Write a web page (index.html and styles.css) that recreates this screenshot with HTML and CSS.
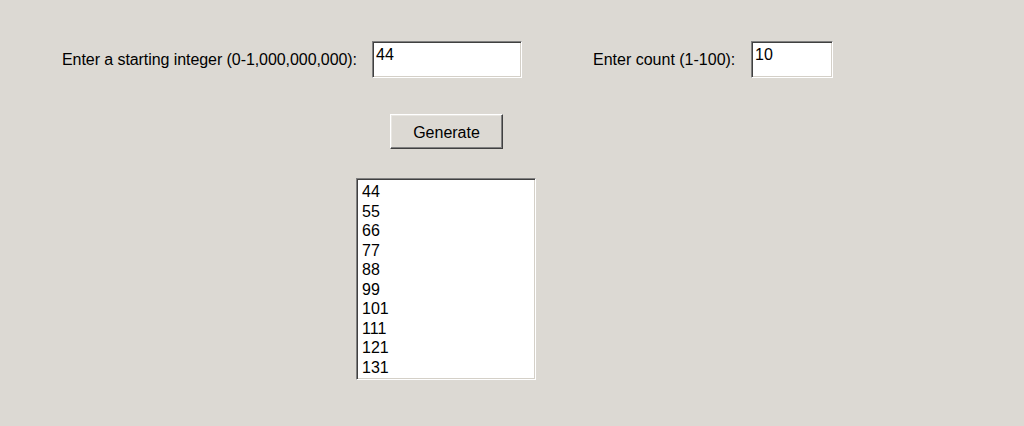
FILE: index.html
```html
<!DOCTYPE html>
<html lang="en">
<head>
<meta charset="utf-8">
<title>Generator</title>
<link rel="stylesheet" href="styles.css">
</head>
<body>
<div class="app">
  <div class="inputs-row">
    <span class="label label-start">Enter a starting integer (0-1,000,000,000):</span>
    <div class="field field-start">44</div>
    <span class="label label-count">Enter count (1-100):</span>
    <div class="field field-count">10</div>
  </div>
  <div class="button-row">
    <div class="button">Generate</div>
  </div>
  <div class="list-row">
    <div class="listbox">
      <div class="item">44</div>
      <div class="item">55</div>
      <div class="item">66</div>
      <div class="item">77</div>
      <div class="item">88</div>
      <div class="item">99</div>
      <div class="item">101</div>
      <div class="item">111</div>
      <div class="item">121</div>
      <div class="item">131</div>
    </div>
  </div>
</div>
</body>
</html>
```

FILE: styles.css
```css
html, body {
  margin: 0;
  padding: 0;
}
body {
  background: #dcd9d3;
  font-family: "Liberation Sans", Arial, sans-serif;
  font-size: 16px;
  color: #000;
  width: 1024px;
  height: 426px;
  overflow: hidden;
}
.app {
  display: flex;
  flex-direction: column;
  padding-top: 41px;
}
.inputs-row {
  display: flex;
  align-items: center;
  padding-left: 62px;
}
.label {
  line-height: 18px;
  white-space: nowrap;
}
.label-start {
  width: 310px;
  letter-spacing: -0.07px;
}
.label-count {
  width: 158px;
  margin-left: 71px;
}
.field {
  box-sizing: border-box;
  height: 37px;
  background: #fff;
  border: 1px solid;
  border-color: #808080 #ffffff #ffffff #808080;
  box-shadow: inset 1px 1px 0 #404040, inset -1px -1px 0 #d4d0c8;
  padding: 3px 3px 0 3px;
  line-height: 19px;
}
.field-start {
  width: 150px;
}
.field-count {
  width: 82px;
}
.button-row {
  display: flex;
  padding-left: 390px;
  margin-top: 36px;
}
.button {
  box-sizing: border-box;
  width: 113px;
  height: 35px;
  display: flex;
  align-items: center;
  justify-content: center;
  padding-top: 2px;
  background: #dcd9d3;
  border: 1px solid;
  border-color: #ffffff #404040 #404040 #ffffff;
  box-shadow: inset -1px -1px 0 #808080, inset 1px 1px 0 #e8e6e1;
}
.list-row {
  display: flex;
  padding-left: 356px;
  margin-top: 29px;
}
.listbox {
  box-sizing: border-box;
  width: 180px;
  height: 202px;
  background: #fff;
  border: 1px solid;
  border-color: #808080 #ffffff #ffffff #808080;
  box-shadow: inset 1px 1px 0 #404040, inset -1px -1px 0 #d4d0c8;
  padding: 3px 4px 0 5px;
}
.item {
  line-height: 19.55px;
  height: 19.55px;
}
```
